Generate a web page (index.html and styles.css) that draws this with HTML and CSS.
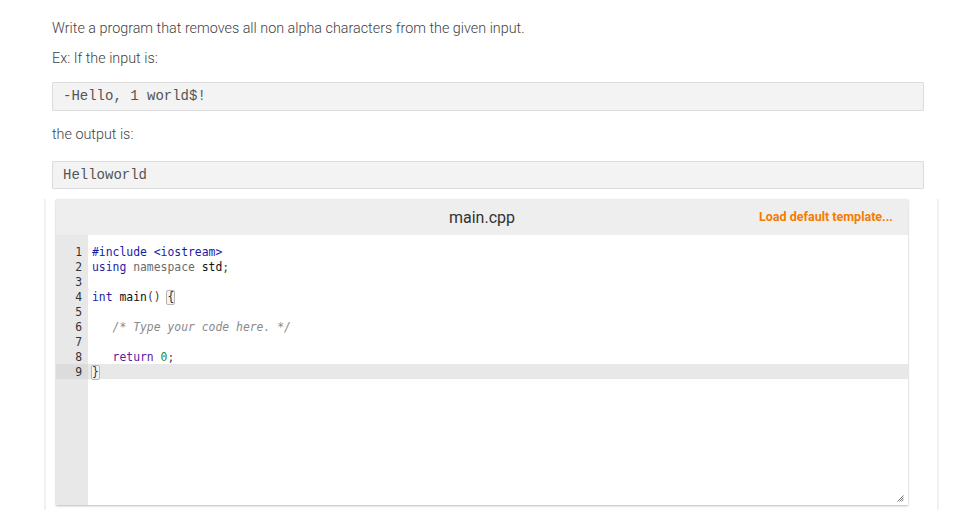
FILE: index.html
```html
<!DOCTYPE html>
<html>
<head>
<meta charset="utf-8">
<link rel="stylesheet" href="styles.css">
</head>
<body>
<div class="page">
  <p class="prose first">Write a program that removes all non alpha characters from the given input.</p>
  <p class="prose">Ex: If the input is:</p>
  <pre class="sample">-Hello, 1 world$!</pre>
  <p class="prose">the output is:</p>
  <pre class="sample out">Helloworld</pre>
</div>
<div class="card">
  <div class="editor">
    <div class="ed-header">
      <span class="filename">main.cpp</span>
      <span class="load">Load default template...</span>
    </div>
    <div class="ed-body">
      <div class="gutter">
        <div class="ln">1</div><div class="ln">2</div><div class="ln">3</div><div class="ln">4</div><div class="ln">5</div><div class="ln">6</div><div class="ln">7</div><div class="ln">8</div><div class="ln active">9</div>
      </div>
      <div class="code">
        <div class="line"><span class="pp">#include &lt;iostream&gt;</span></div>
        <div class="line"><span class="kw">using</span> <span class="ns">namespace</span> <span class="id">std</span><span class="pn">;</span></div>
        <div class="line">&nbsp;</div>
        <div class="line"><span class="kw">int</span> <span class="id">main</span><span class="pn">()</span> <span class="br">{</span></div>
        <div class="line">&nbsp;</div>
        <div class="line">   <span class="cm">/* Type your code here. */</span></div>
        <div class="line">&nbsp;</div>
        <div class="line">   <span class="rt">return</span> <span class="num">0</span><span class="pn">;</span></div>
        <div class="line active"><span class="br">}</span></div>
        <svg class="grip" width="7" height="7" viewBox="0 0 7 7"><path d="M6.5 0.5 L0.5 6.5 M6.5 2.5 L2.5 6.5 M6.5 4.5 L4.5 6.5" stroke="#777" stroke-width="1" fill="none"/></svg>
      </div>
    </div>
  </div>
</div>
</body>
</html>
```

FILE: styles.css
```css
html, body {
  margin: 0;
  padding: 0;
  background: #ffffff;
}
body {
  font-family: Roboto, "Liberation Sans", sans-serif;
  color: #4a4a4a;
}
.page {
  padding: 19px 0 0 52px;
  width: 872px;
}
.prose {
  margin: 10px 0 0 0;
  font-size: 14.35px;
  font-weight: 300;
  line-height: 20px;
  color: #3f3f3f;
}
.prose.first {
  margin-top: 0;
}
.sample {
  margin: 13px 0 14px 0;
  height: 27px;
  line-height: 27px;
  padding: 0 0 0 10px;
  background: #f3f3f3;
  border: 1px solid #dcdcdc;
  border-radius: 1px;
  font-family: "Liberation Mono", monospace;
  font-size: 14px;
  color: #555;
}
.sample.out {
  margin: 16px 0 0 0;
  height: 26px;
  line-height: 26px;
}
.card {
  margin: 10px 0 0 44px;
  width: 871px;
  height: 311px;
  padding: 0 10px 0 10px;
  border-left: 2px solid #f1f1f1;
  border-right: 2px solid #f1f1f1;
}
.editor {
  width: 852px;
  box-shadow: 0 1px 2px rgba(0,0,0,0.28);
}
.ed-header {
  position: relative;
  height: 36px;
  background: #eeeeee;
  display: flex;
  align-items: center;
  justify-content: center;
}
.filename {
  font-size: 16px;
  color: #333;
  font-weight: 400;
}
.load {
  position: absolute;
  right: 15px;
  top: 10px;
  font-size: 12.5px;
  font-weight: 700;
  color: #f57c00;
}
.ed-body {
  display: flex;
  height: 270px;
  background: #fff;
  font-family: "DejaVu Sans Mono", monospace;
  font-size: 11.4px;
  line-height: 15px;
}
.gutter {
  width: 32px;
  background: #e8e8e8;
  padding-top: 9px;
  flex: none;
}
.ln {
  text-align: right;
  padding-right: 6px;
  height: 14px;
  padding-top: 1px;
  line-height: 15px;
  color: #333;
}
.ln.active {
  background: #dcdcdc;
}
.code {
  position: relative;
  flex: 1;
  padding-top: 9px;
}
.line {
  height: 14px;
  padding-top: 1px;
  padding-left: 4px;
  white-space: pre;
  color: #222;
}
.line.active {
  background: #e8e8e8;
}
.pp { color: #1a1aa6; }
.kw { color: #1f1fa8; }
.ns { color: #6b6b6b; }
.id { color: #111; }
.pn { color: #444; }
.cm { color: #8a8a8a; font-style: italic; }
.rt { color: #5b22a0; }
.num { color: #2b8a2b; }
.br {
  display: inline-block;
  height: 13px;
  line-height: 13px;
  border: 1px solid #b5b5b5;
  border-radius: 2px;
  background: #f4f4f4;
  margin-left: -1px;
  margin-right: -1px;
  color: #333;
  vertical-align: top;
}
.grip {
  position: absolute;
  right: 4px;
  bottom: 3px;
}
```
